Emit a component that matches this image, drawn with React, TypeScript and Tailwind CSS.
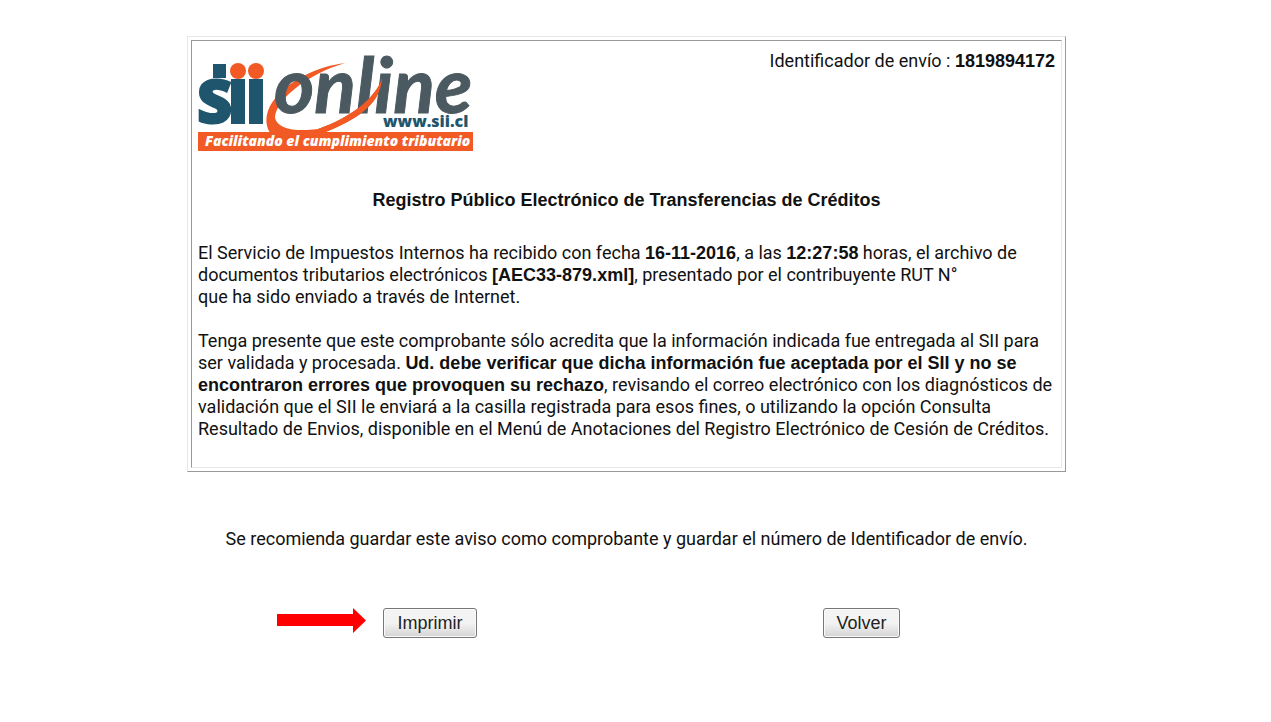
function Logo() {
  return (
    <svg viewBox="198 44 276 108" className="h-[108px] w-[276px] overflow-visible" role="img" aria-label="SII online">
      <path
        d="M345 62 C320 65 285 79 270 105 C264 117 266 128 272 134 L318 134 C350 122 381 106 382 77 C376 97 350 117 318 128 C295 131 278 128 275 117 C275 100 305 74 345 62Z"
        fill="#f15a24"
      />
      <text
        x="197"
        y="122"
        fontFamily="'Open Sans', sans-serif"
        fontWeight="800"
        fontSize="61"
        fill="#1f566e"
        stroke="#1f566e"
        strokeWidth="2"
      >
        S
      </text>
      <rect x="213" y="63" width="13" height="14" fill="#1f566e" />
      <rect x="231" y="78" width="14" height="45" fill="#1f566e" />
      <rect x="249" y="78" width="14" height="45" fill="#1f566e" />
      <circle cx="238" cy="70" r="8" fill="#f15a24" />
      <circle cx="256" cy="70" r="8" fill="#f15a24" />
      <text
        x="274"
        y="112"
        fontFamily="Lato, sans-serif"
        fontWeight="700"
        fontStyle="italic"
        fontSize="77"
        fill="#4a5a60"
        stroke="#4a5a60"
        strokeWidth="1"
      >
        online
      </text>
      <path d="M318 134 C350 122 381 106 382 77 C376 97 350 117 318 128Z" fill="#f15a24" />
      <text x="383" y="126" fontFamily="'Open Sans', sans-serif" fontWeight="800" fontSize="16" fill="#1f566e">
        www.sii.cl
      </text>
      <rect x="198" y="131" width="275" height="19" fill="#f15a24" />
      <text x="205" y="145" fontFamily="'Open Sans', sans-serif" fontWeight="800" fontStyle="italic" fontSize="14" fill="#fff">
        Facilitando el cumplimiento tributario
      </text>
    </svg>
  );
}

const boldClass = "font-['Liberation_Sans',Arial,sans-serif] font-bold";

const buttonClass =
  "h-[30px] rounded-[3px] border border-[#777] bg-linear-to-b from-[#f3f3f3] from-50% to-[#d4d4d4] font-['Liberation_Sans',Arial,sans-serif] text-[18px] leading-6 text-[#222] shadow-[inset_0_0_0_1px_#fafafa]";

export default function App() {
  return (
    <main className="min-h-screen bg-white px-4 pt-9 pr-[34px] font-[Roboto,Arial,sans-serif] text-[18px] leading-[22px] text-[#111]">
      <div className="mx-auto max-w-[879px]">
        <section className="border border-t-[#e8e8e8] border-r-[#999] border-b-[#999] border-l-[#e8e8e8] p-[3px]">
          <div className="border border-t-[#999] border-r-[#e8e8e8] border-b-[#e8e8e8] border-l-[#999] px-[6px] pt-1 pb-[27px]">
            <header className="flex items-start justify-between">
              <Logo />
              <p className="pt-[5px]">
                Identificador de envío : <b className={boldClass}>1819894172</b>
              </p>
            </header>
            <h1 className={`${boldClass} mt-9 text-center`}>Registro Público Electrónico de Transferencias de Créditos</h1>
            <p className="mt-[31px]">
              El Servicio de Impuestos Internos ha recibido con fecha <b className={boldClass}>16-11-2016</b>, a las{" "}
              <b className={boldClass}>12:27:58</b> horas, el archivo de
              <br />
              documentos tributarios electrónicos <b className={boldClass}>[AEC33-879.xml]</b>, presentado por el contribuyente RUT N°
              <br />
              que ha sido enviado a través de Internet.
            </p>
            <p className="mt-[22px]">
              Tenga presente que este comprobante sólo acredita que la información indicada fue entregada al SII para
              <br />
              ser validada y procesada.{" "}
              <b className={boldClass}>
                Ud. debe verificar que dicha información fue aceptada por el SII y no se
                <br />
                encontraron errores que provoquen su rechazo
              </b>
              , revisando el correo electrónico con los diagnósticos de
              <br />
              validación que el SII le enviará a la casilla registrada para esos fines, o utilizando la opción Consulta
              <br />
              Resultado de Envios, disponible en el Menú de Anotaciones del Registro Electrónico de Cesión de Créditos.
            </p>
          </div>
        </section>
        <p className="mt-14 text-center">
          Se recomienda guardar este aviso como comprobante y guardar el número de Identificador de envío.
        </p>
        <div className="mt-[58px] flex items-start justify-between pr-[166px] pl-[90px]">
          <div className="flex items-start gap-[17px]">
            <svg viewBox="0 0 89 25" className="h-[25px] w-[89px]" aria-hidden="true">
              <path d="M0 6H76V0L89 12.500L76 25V18H0Z" fill="#f00" />
            </svg>
            <button type="button" className={`${buttonClass} w-[94px]`}>
              Imprimir
            </button>
          </div>
          <button type="button" className={`${buttonClass} w-[77px]`}>
            Volver
          </button>
        </div>
      </div>
    </main>
  );
}
